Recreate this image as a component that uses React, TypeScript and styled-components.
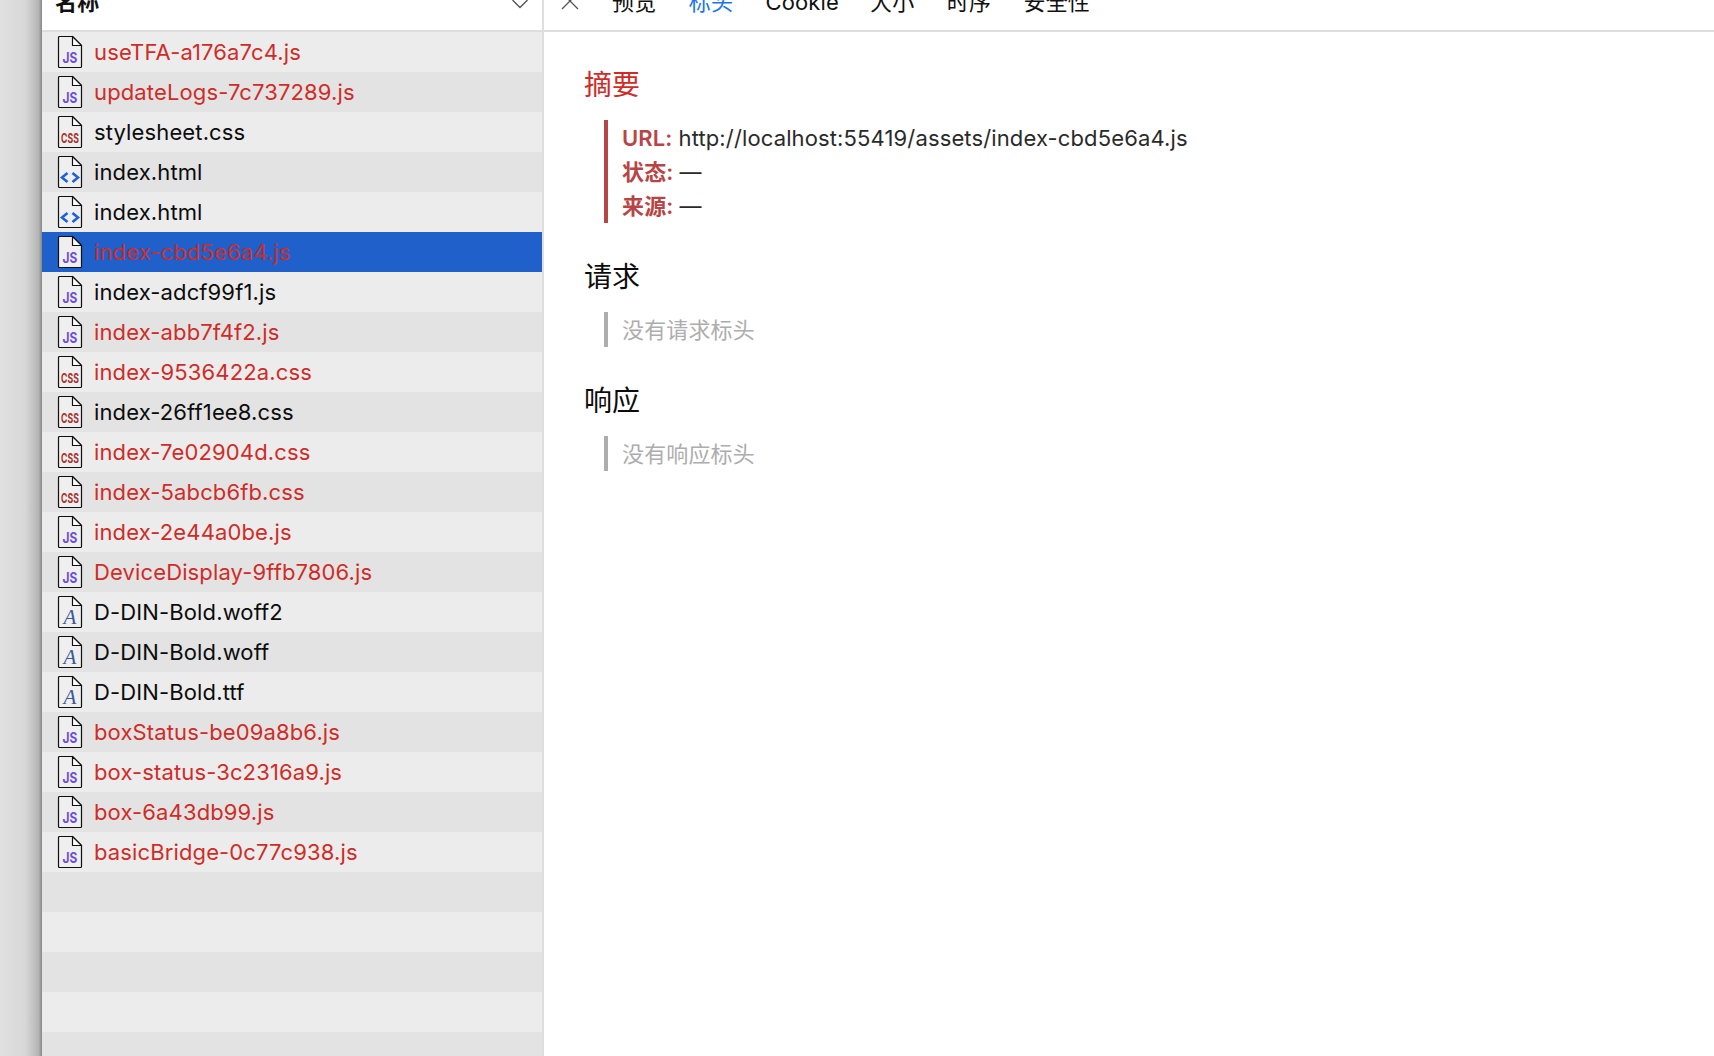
import React from 'react';
import styled, { createGlobalStyle } from 'styled-components';

type FileKind = 'js' | 'css' | 'html' | 'font';

interface FileRow {
  name: string;
  kind: FileKind;
  failed?: boolean;
  selected?: boolean;
}

const files: FileRow[] = [
  { name: 'useTFA-a176a7c4.js', kind: 'js', failed: true },
  { name: 'updateLogs-7c737289.js', kind: 'js', failed: true },
  { name: 'stylesheet.css', kind: 'css' },
  { name: 'index.html', kind: 'html' },
  { name: 'index.html', kind: 'html' },
  { name: 'index-cbd5e6a4.js', kind: 'js', failed: true, selected: true },
  { name: 'index-adcf99f1.js', kind: 'js' },
  { name: 'index-abb7f4f2.js', kind: 'js', failed: true },
  { name: 'index-9536422a.css', kind: 'css', failed: true },
  { name: 'index-26ff1ee8.css', kind: 'css' },
  { name: 'index-7e02904d.css', kind: 'css', failed: true },
  { name: 'index-5abcb6fb.css', kind: 'css', failed: true },
  { name: 'index-2e44a0be.js', kind: 'js', failed: true },
  { name: 'DeviceDisplay-9ffb7806.js', kind: 'js', failed: true },
  { name: 'D-DIN-Bold.woff2', kind: 'font' },
  { name: 'D-DIN-Bold.woff', kind: 'font' },
  { name: 'D-DIN-Bold.ttf', kind: 'font' },
  { name: 'boxStatus-be09a8b6.js', kind: 'js', failed: true },
  { name: 'box-status-3c2316a9.js', kind: 'js', failed: true },
  { name: 'box-6a43db99.js', kind: 'js', failed: true },
  { name: 'basicBridge-0c77c938.js', kind: 'js', failed: true },
];

const TOTAL_ROWS = 26;
const tabs = ['预览', '标头', 'Cookie', '大小', '时序', '安全性'];

const GlobalStyle = createGlobalStyle`
  html, body {
    margin: 0;
    padding: 0;
    height: 100%;
    overflow: hidden;
    background: #fff;
    font-family: Inter, "Noto Sans CJK SC", sans-serif;
    letter-spacing: 0.13px;
  }
`;

const Page = styled.div`
  display: flex;
  width: 1714px;
  height: 1056px;
  overflow: hidden;
`;

const Gutter = styled.div`
  flex: 0 0 42px;
  background: linear-gradient(90deg, #e0e0e0 0%, #d8d8d8 60%, #b4b4b4 92%, #868686 100%);
`;

const Sidebar = styled.div`
  flex: 0 0 500px;
  display: flex;
  flex-direction: column;
  border-right: 2px solid #dedede;
  overflow: hidden;
`;

const SideHeader = styled.div`
  flex: 0 0 30px;
  display: flex;
  align-items: flex-end;
  justify-content: space-between;
  padding: 0 13px;
  border-bottom: 2px solid #dedede;
  overflow: hidden;
`;

const HeaderLabel = styled.span`
  font-size: 22px;
  line-height: 30px;
  font-weight: 700;
  color: #111;
  margin-bottom: 13px;
`;

const Chevron = styled.svg`
  width: 18px;
  height: 10px;
  margin-bottom: 21px;
`;

const Row = styled.div<{ $index: number; $selected?: boolean; $failed?: boolean }>`
  flex: 0 0 40px;
  display: flex;
  align-items: center;
  gap: 11px;
  padding-left: 15px;
  box-sizing: border-box;
  font-size: 22px;
  color: ${(p) => (p.$failed ? '#cf2c28' : '#0c0c0c')};
  background: ${(p) =>
    p.$selected ? '#2060cb' : p.$index % 2 === 0 ? '#ececec' : '#e3e3e3'};
`;

const Main = styled.div`
  flex: 1;
  display: flex;
  flex-direction: column;
  min-width: 0;
`;

const TabBar = styled.div`
  flex: 0 0 30px;
  display: flex;
  align-items: flex-end;
  padding-left: 17px;
  border-bottom: 2px solid #dedede;
  overflow: hidden;
`;

const CloseIcon = styled.svg`
  width: 18px;
  height: 18px;
  margin-bottom: 20px;
  margin-right: 33px;
`;

const Tab = styled.span<{ $active?: boolean }>`
  font-size: 22px;
  line-height: 30px;
  margin-right: 32.5px;
  margin-bottom: 13px;
  color: ${(p) => (p.$active ? '#1a73f0' : '#111')};

  &:nth-of-type(3) {
    margin-right: 31px;
  }
`;

const Content = styled.div`
  padding: 33px 40px;
`;

const Heading = styled.h3<{ $error?: boolean }>`
  margin: 0;
  font-size: 28px;
  line-height: 40px;
  font-weight: 400;
  letter-spacing: 0;
  color: ${(p) => (p.$error ? '#cf2c28' : '#0c0c0c')};
`;

const Quote = styled.div<{ $error?: boolean }>`
  margin: 15px 0 34px 20px;
  padding: 1px 0 0 14px;
  border-left: 4px solid ${(p) => (p.$error ? '#b84545' : '#adadad')};
  font-size: 22px;
  line-height: 34px;
  color: ${(p) => (p.$error ? '#2a2a2a' : '#adadad')};
`;

const Field = styled.div`
  white-space: nowrap;
`;

const FieldName = styled.span`
  font-weight: 600;
  color: #b84545;
  margin-right: 6px;
`;

const labels = {
  js: { text: 'JS', color: '#6f4fd8', size: 14.5, length: 15 },
  css: { text: 'CSS', color: '#a8322c', size: 13, length: 18 },
};

const FileIcon = ({ kind }: { kind: FileKind }) => (
  <svg width="26" height="34" viewBox="0 0 26 34" style={{ flexShrink: 0 }}>
    <path
      d="M2.5 1.5H15.5L24.5 10.5V31.5a1 1 0 0 1-1 1H2.5a1 1 0 0 1-1-1V2.5a1 1 0 0 1 1-1Z"
      fill="#efefef"
      stroke="#111"
      strokeWidth="1.2"
    />
    <path d="M15.5 1.5V10.5H24.5Z" fill="#fff" stroke="#111" strokeWidth="1.2" strokeLinejoin="round" />
    {kind === 'font' && (
      <text x="13" y="29" textAnchor="middle" fontFamily="Liberation Serif" fontStyle="italic" fontSize="21" fill="#3a5a94">
        A
      </text>
    )}
    {kind === 'html' && (
      <path
        d="M10.5 18L5 22.5L10.5 27M15.5 18L21 22.5L15.5 27"
        fill="none"
        stroke="#2060d8"
        strokeWidth="2.6"
      />
    )}
    {(kind === 'js' || kind === 'css') && (
      <text
        x="13"
        y="27.5"
        textAnchor="middle"
        fontFamily="Inter"
        fontWeight="700"
        fontSize={labels[kind].size}
        textLength={labels[kind].length}
        lengthAdjust="spacingAndGlyphs"
        fill={labels[kind].color}
      >
        {labels[kind].text}
      </text>
    )}
  </svg>
);

const App = () => {
  const blanks = Array.from({ length: TOTAL_ROWS - files.length }, (_, i) => files.length + i);
  return (
    <Page>
      <GlobalStyle />
      <Gutter />
      <Sidebar>
        <SideHeader>
          <HeaderLabel>名称</HeaderLabel>
          <Chevron viewBox="0 0 18 10">
            <path d="M1.5 1L9 8.5L16.5 1" fill="none" stroke="#555" strokeWidth="1.4" />
          </Chevron>
        </SideHeader>
        {files.map((f, i) => (
          <Row key={i} $index={i} $selected={f.selected} $failed={f.failed}>
            <FileIcon kind={f.kind} />
            {f.name}
          </Row>
        ))}
        {blanks.map((i) => (
          <Row key={i} $index={i} />
        ))}
      </Sidebar>
      <Main>
        <TabBar>
          <CloseIcon viewBox="0 0 18 18">
            <path d="M1 1L17 17M17 1L1 17" stroke="#555" strokeWidth="1.3" />
          </CloseIcon>
          {tabs.map((t) => (
            <Tab key={t} $active={t === '标头'}>
              {t}
            </Tab>
          ))}
        </TabBar>
        <Content>
          <Heading $error>摘要</Heading>
          <Quote $error>
            <Field>
              <FieldName>URL:</FieldName>http://localhost:55419/assets/index-cbd5e6a4.js
            </Field>
            <Field>
              <FieldName>状态:</FieldName>—
            </Field>
            <Field>
              <FieldName>来源:</FieldName>—
            </Field>
          </Quote>
          <Heading>请求</Heading>
          <Quote>没有请求标头</Quote>
          <Heading>响应</Heading>
          <Quote>没有响应标头</Quote>
        </Content>
      </Main>
    </Page>
  );
};

export default App;
